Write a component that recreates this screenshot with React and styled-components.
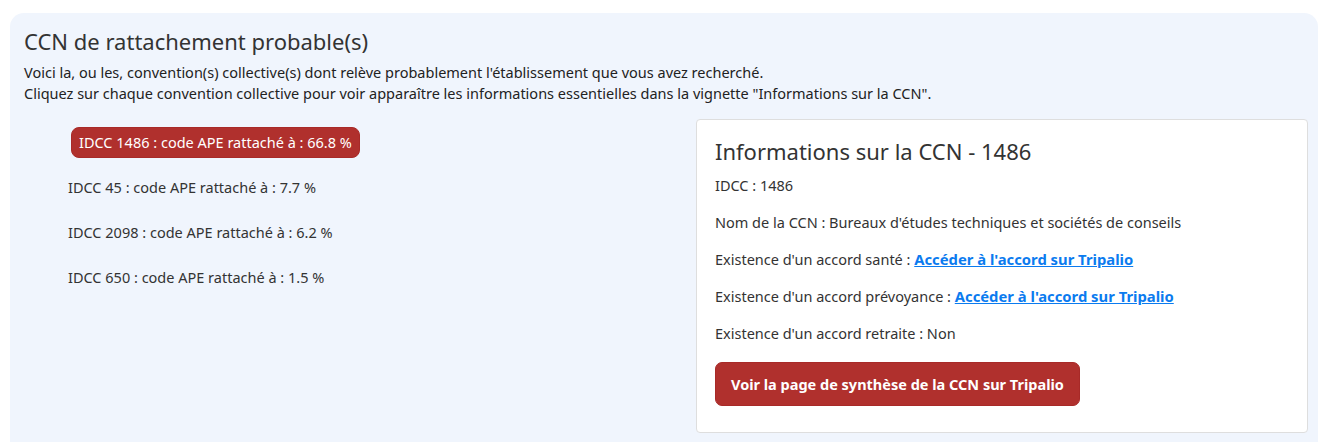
import React from "react";
import styled, { createGlobalStyle } from "styled-components";

const Global = createGlobalStyle`
  html, body { margin: 0; padding: 0; background: #ffffff; }
  body { font-family: "Noto Sans", "Open Sans", sans-serif; color: #333333; }
  * { box-sizing: border-box; }
`;

const Page = styled.div`
  padding: 13px 2px 0 10px;
  height: 442px;
  overflow: hidden;
`;

const Panel = styled.section`
  background: #f0f5fd;
  border-radius: 14px;
  padding: 13px 10px 40px 14px;
  min-height: 460px;
`;

const Title = styled.h2`
  margin: 0 0 6px 0;
  font-size: 22px;
  font-weight: 400;
  line-height: 30px;
  color: #333333;
`;

const Intro = styled.p`
  margin: 0;
  font-size: 14.5px;
  line-height: 21px;
  color: #222222;
`;

const Columns = styled.div`
  display: grid;
  grid-template-columns: 1fr 612px;
  margin-top: 15px;
`;

const List = styled.ul`
  list-style: none;
  margin: 0;
  padding: 8px 0 0 43px;
  display: flex;
  flex-direction: column;
  gap: 14px;
`;

const Item = styled.li`
  display: flex;
`;

const Choice = styled.button`
  font-family: inherit;
  font-size: 14.5px;
  line-height: 21px;
  padding: 4px ${(p) => (p.$active ? "7px" : "0")};
  margin-left: ${(p) => (p.$active ? "4px" : "0")};
  border: 1px solid ${(p) => (p.$active ? "#a82a28" : "transparent")};
  border-radius: 8px;
  background: ${(p) => (p.$active ? "#b0302d" : "transparent")};
  color: ${(p) => (p.$active ? "#ffffff" : "#333333")};
  cursor: pointer;
  text-align: left;
`;

const Card = styled.div`
  background: #ffffff;
  border: 1px solid #dedede;
  border-radius: 4px;
  padding: 16px 18px 26px 18px;
`;

const CardTitle = styled.h3`
  margin: 0 0 9px 0;
  font-size: 22px;
  font-weight: 400;
  line-height: 30px;
  color: #333333;
`;

const Line = styled.p`
  margin: 0 0 16px 0;
  font-size: 14.5px;
  line-height: 21px;
  color: #333333;
`;

const Link = styled.a`
  color: #0b7bef;
  font-size: 14.8px;
  font-weight: 700;
  text-decoration: underline;
`;

const Action = styled.button`
  margin-top: 2px;
  font-family: inherit;
  font-size: 14.5px;
  font-weight: 700;
  color: #ffffff;
  background: #b0302d;
  border: 1px solid #a82a28;
  border-radius: 7px;
  padding: 11px 15px;
  line-height: 20px;
  cursor: pointer;
`;

const items = [
  { id: "1486", pct: "66.8" },
  { id: "45", pct: "7.7" },
  { id: "2098", pct: "6.2" },
  { id: "650", pct: "1.5" },
];

export default function App() {
  return (
    <>
      <Global />
      <Page>
        <Panel>
          <Title>CCN de rattachement probable(s)</Title>
          <Intro>
            Voici la, ou les, convention(s) collective(s) dont relève probablement l'établissement que vous avez recherché.
          </Intro>
          <Intro>
            Cliquez sur chaque convention collective pour voir apparaître les informations essentielles dans la vignette "Informations sur la CCN".
          </Intro>
          <Columns>
            <List>
              {items.map((it, i) => (
                <Item key={it.id}>
                  <Choice $active={i === 0}>
                    IDCC {it.id} : code APE rattaché à : {it.pct} %
                  </Choice>
                </Item>
              ))}
            </List>
            <Card>
              <CardTitle>Informations sur la CCN - 1486</CardTitle>
              <Line>IDCC : 1486</Line>
              <Line>Nom de la CCN : Bureaux d'études techniques et sociétés de conseils</Line>
              <Line>
                Existence d'un accord santé : <Link href="#">Accéder à l'accord sur Tripalio</Link>
              </Line>
              <Line>
                Existence d'un accord prévoyance : <Link href="#">Accéder à l'accord sur Tripalio</Link>
              </Line>
              <Line>Existence d'un accord retraite : Non</Line>
              <Action>Voir la page de synthèse de la CCN sur Tripalio</Action>
            </Card>
          </Columns>
        </Panel>
      </Page>
    </>
  );
}
